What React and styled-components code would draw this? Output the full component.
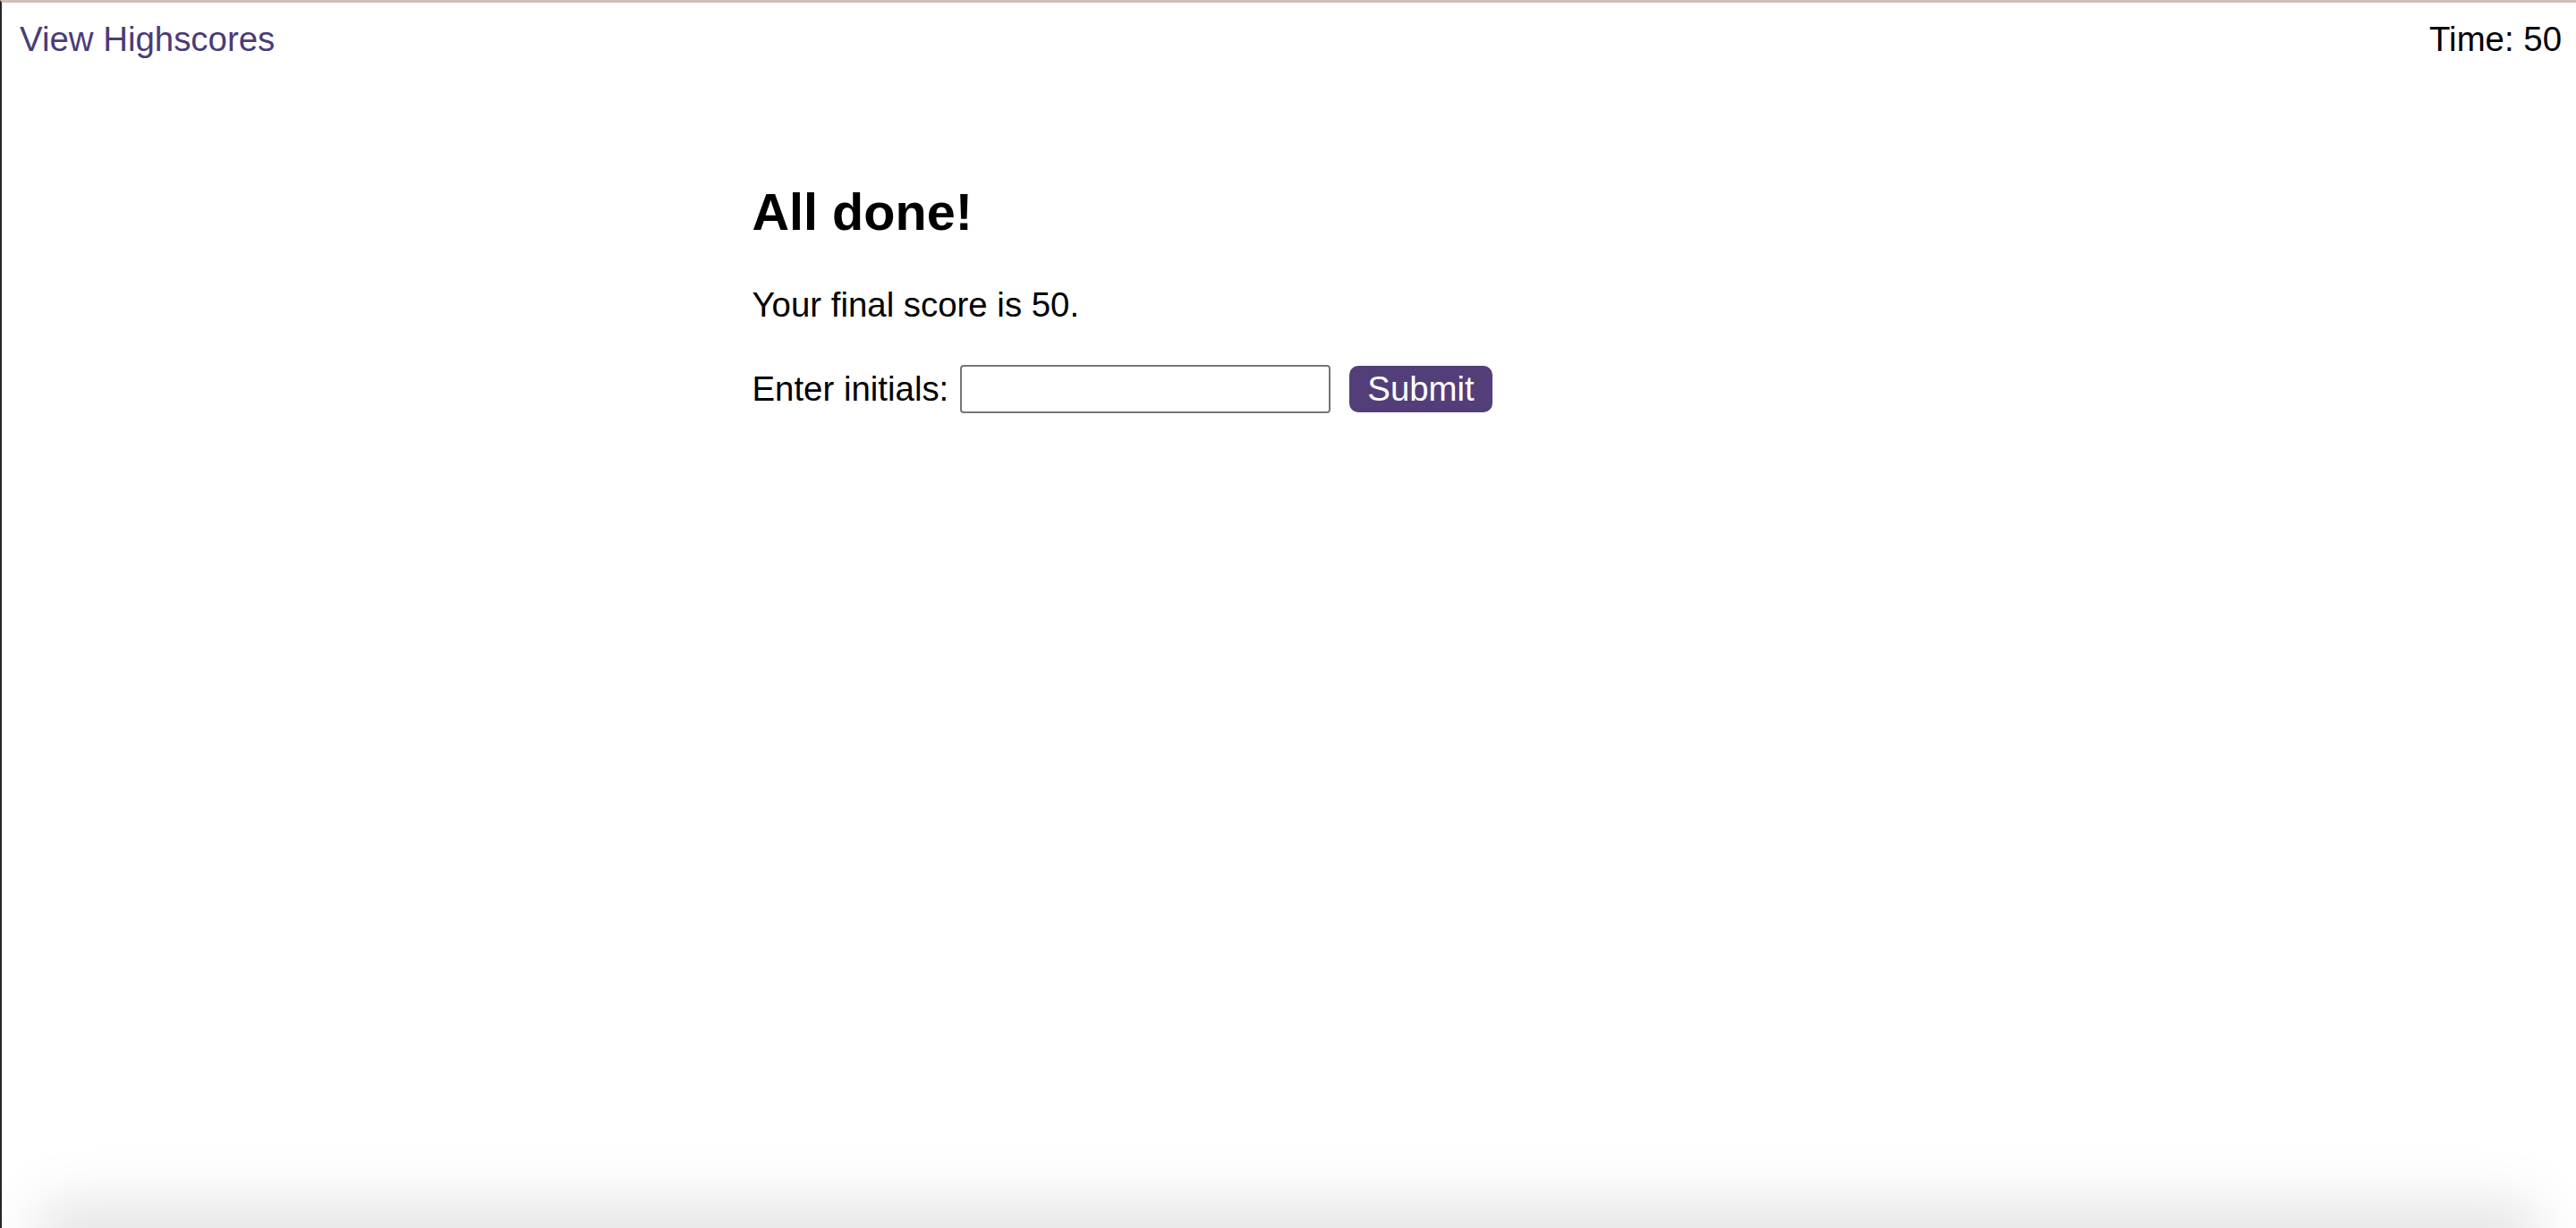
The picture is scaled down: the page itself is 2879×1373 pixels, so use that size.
import React, { useState } from "react";
import styled, { createGlobalStyle } from "styled-components";

const GlobalStyle = createGlobalStyle`
  html, body {
    margin: 0;
    padding: 0;
    background: #fff;
  }
  body {
    font-family: "Liberation Sans", Arial, sans-serif;
    font-size: 38.4px;
    color: #000;
  }
  * {
    box-sizing: border-box;
  }
`;

var Page = styled.div`
  min-height: 100vh;
  border-top: 3px solid #cfc0b8;
  border-left: 2px solid #262626;
  display: flex;
  flex-direction: column;
`;

var Header = styled.header`
  display: flex;
  flex-direction: row;
  justify-content: space-between;
  align-items: flex-start;
  padding: 19px 16px 0 20px;
  line-height: normal;
`;

var HighscoreLink = styled.a`
  color: #4b3b78;
  text-decoration: none;
  cursor: pointer;
`;

var Timer = styled.div`
  color: #000;
`;

var Main = styled.main`
  width: 1200px;
  margin: 0 auto;
  padding-top: 138px;
`;

var Title = styled.h2`
  margin: 0;
  font-size: 57.6px;
  font-weight: bold;
  line-height: normal;
`;

var Score = styled.p`
  margin: 49px 0 0 0;
  line-height: normal;
`;

var Form = styled.form`
  display: flex;
  flex-direction: row;
  align-items: center;
  margin-top: 45px;
`;

var Label = styled.label`
  line-height: normal;
`;

var InitialsInput = styled.input`
  margin-left: 13px;
  width: 414px;
  height: 54px;
  border: 2px solid #767676;
  border-radius: 4px;
  padding: 2px 6px;
  font-family: inherit;
  font-size: 30px;
  outline: none;
`;

var SubmitButton = styled.button`
  margin-left: 21px;
  padding: 4px 20px;
  border: none;
  border-radius: 10px;
  background: #523f7a;
  color: #fff;
  font-family: inherit;
  font-size: 38.4px;
  line-height: 44px;
  cursor: pointer;
`;

var BottomShade = styled.div`
  position: fixed;
  left: 36px;
  right: 36px;
  bottom: -50px;
  height: 80px;
  background: rgba(0, 0, 0, 0.1);
  border-radius: 40px;
  filter: blur(30px);
  pointer-events: none;
`;

var App = function () {
  const [initials, setInitials] = useState("");
  const score = 50;
  const time = 50;

  return (
    <>
      <GlobalStyle />
      <Page>
        <Header>
          <HighscoreLink>View Highscores</HighscoreLink>
          <Timer>Time: {time}</Timer>
        </Header>
        <Main>
          <Title>All done!</Title>
          <Score>Your final score is {score}.</Score>
          <Form onSubmit={(e) => e.preventDefault()}>
            <Label htmlFor="initials">Enter initials:</Label>
            <InitialsInput
              id="initials"
              type="text"
              value={initials}
              onChange={(e) => setInitials(e.target.value)}
            />
            <SubmitButton type="submit">Submit</SubmitButton>
          </Form>
        </Main>
      </Page>
      <BottomShade />
    </>
  );
};

export default App;
